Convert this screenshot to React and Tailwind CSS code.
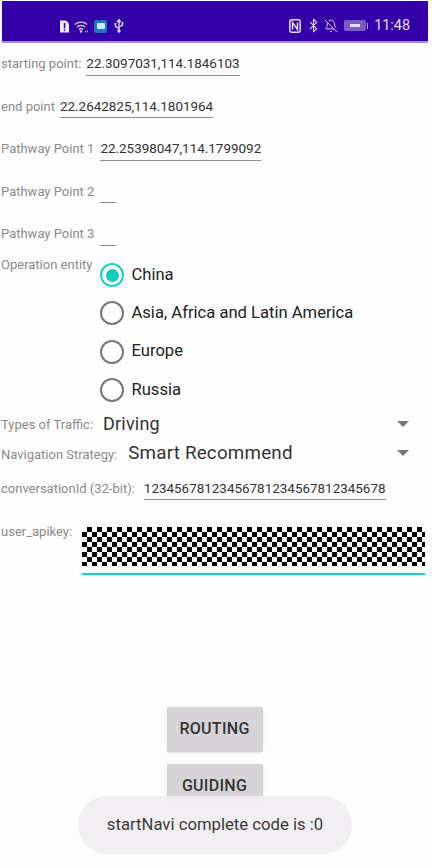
import React from "react";
import { Bluetooth, BellOff } from "lucide-react";

function Field({ label, value, h = "h-[42.6px]", gap = "ml-[5px]", w }) {
  return (
    <div className={`flex items-start ${h}`}>
      <span className="pl-[1px] text-[13px] leading-[20px] text-[#8b8b8b] whitespace-nowrap">{label}</span>
      <div className={`${gap} ${w || ""} border-b-[1.5px] border-[#8f8f8f] h-[21.5px] text-[13.45px] leading-[20px] text-[#333333] whitespace-nowrap`}>
        {value}
      </div>
    </div>
  );
}

function Radio({ label, checked }) {
  return (
    <div className="flex items-center h-[38.3px]">
      <div className={`w-[24px] h-[24px] rounded-full border-[2.5px] flex items-center justify-center ${checked ? "border-[#1dd0c2]" : "border-[#777777]"}`}>
        {checked && <div className="w-[13px] h-[13px] rounded-full bg-[#10cdbd]" />}
      </div>
      <span className="ml-[7px] text-[16.6px] text-[#222222] whitespace-nowrap">{label}</span>
    </div>
  );
}

function Spinner({ label, value, valueClass, h }) {
  return (
    <div className={`flex items-center ${h} relative`}>
      <span className="pl-[1px] pt-[2px] text-[13px] text-[#8b8b8b] whitespace-nowrap">{label}</span>
      <span className={`${valueClass} tracking-[0.2px] text-[#333333] whitespace-nowrap`}>{value}</span>
      <div className="ml-auto mr-[19px] w-0 h-0 border-l-[6px] border-r-[6px] border-t-[6px] border-l-transparent border-r-transparent border-t-[#777777]" />
    </div>
  );
}

function StatusIcons() {
  return (
    <div className="flex items-center justify-between h-[40px] pl-[57px] pr-[18px] text-[#e6def5]">
      <div className="flex items-center pt-[10px]">
        <svg width="11" height="13" viewBox="0 0 11 13">
          <path d="M1 0.5h6l3 3v9H1z" fill="#efeaf8" />
          <rect x="4.8" y="3" width="1.5" height="5.5" fill="#3200a8" />
          <rect x="4.8" y="9.5" width="1.5" height="1.5" fill="#3200a8" />
        </svg>
        <svg className="ml-[4px]" width="15" height="13" viewBox="0 0 15 13" fill="none" stroke="#d9d0ee" strokeWidth="1.3">
          <path d="M1 4.5a9 9 0 0 1 12 0" />
          <path d="M3 7a6 6 0 0 1 8 0" />
          <path d="M5 9.4a3 3 0 0 1 4 0" />
          <circle cx="7" cy="11.5" r="0.7" fill="#d9d0ee" />
          <path d="M11 11.5h3" strokeDasharray="1 1" />
        </svg>
        <div className="ml-[5px] w-[13px] h-[13px] rounded-[2px] bg-[#1b78c4] flex items-center justify-center">
          <div className="w-[8px] h-[6px] bg-[#cfe6f6] rounded-[1px]" />
        </div>
        <svg className="ml-[7px]" width="10" height="14" viewBox="0 0 10 14" fill="none" stroke="#e6def5" strokeWidth="1.3">
          <path d="M5 13V2" />
          <path d="M3.6 2.6 5 0.6l1.4 2z" fill="#e6def5" />
          <path d="M5 9.5 1.5 7.5V5.5" />
          <path d="M5 8 8.5 6V4.5" />
          <circle cx="5" cy="12" r="1" fill="#e6def5" />
          <rect x="0.6" y="4" width="1.8" height="1.8" fill="#e6def5" stroke="none" />
          <circle cx="8.5" cy="4" r="1" fill="#e6def5" stroke="none" />
        </svg>
      </div>
      <div className="flex items-center pt-[10px]">
        <svg width="12" height="14" viewBox="0 0 12 14" fill="none" stroke="#e6def5" strokeWidth="1.5">
          <rect x="0.8" y="0.8" width="10.4" height="12.4" rx="2" />
          <path d="M3.5 10.5V3.5l5 7V3.5" />
        </svg>
        <Bluetooth size={15} strokeWidth={1.7} className="ml-[5px]" />
        <BellOff size={14} strokeWidth={1.6} className="ml-[3px]" />
        <div className="ml-[6px] flex items-center">
          <div className="w-[22px] h-[11px] rounded-[2px] bg-[#7a5cc4] flex items-center justify-center">
            <div className="w-[10px] h-[3px] bg-[#e6def5]" />
          </div>
          <div className="ml-[1px] w-[1.5px] h-[6px] bg-[#b9a8e0]" />
        </div>
        <span className="ml-[6px] text-[14.4px] text-[#e6def5]">11:48</span>
      </div>
    </div>
  );
}

export default function App() {
  return (
    <div
      className="relative w-[432px] h-[868px] overflow-hidden bg-[#fdfdfd] pt-[1px]"
      style={{ fontFamily: "Roboto, sans-serif" }}
    >
      <div className="ml-[2px] mr-[4px] bg-[#3300a9] border-b-[2px] border-[#a58ad8]">
        <StatusIcons />
      </div>

      <div className="pt-[11px] mr-[4px]">
        <Field label="starting point:" value="22.3097031,114.1846103" />
        <Field label="end point" value="22.2642825,114.1801964" />
        <Field label="Pathway Point 1" value="22.25398047,114.1799092" gap="ml-[6px]" />
        <Field label="Pathway Point 2" value="" w="w-[16px]" gap="ml-[6px]" />
        <Field label="Pathway Point 3" value="" w="w-[16px]" gap="ml-[6px]" />

        <div className="flex items-start h-[154px] -mt-[12px]">
          <span className="pl-[1px] text-[13px] leading-[20px] text-[#8b8b8b] whitespace-nowrap">Operation entity</span>
          <div className="ml-[8px] pt-[1px]">
            <Radio label="China" checked />
            <Radio label="Asia, Africa and Latin America" />
            <Radio label="Europe" />
            <Radio label="Russia" />
          </div>
        </div>

        <Spinner label="Types of Traffic:" value="Driving" valueClass="ml-[10px] text-[18px]" h="h-[30px]" />
        <Spinner label="Navigation Strategy:" value="Smart Recommend" valueClass="ml-[11px] text-[18.8px]" h="h-[29px]" />

        <div className="mt-[11px]">
          <Field label="conversationId (32-bit):" value="12345678123456781234567812345678" gap="ml-[9px]" h="h-[43px]" />
        </div>

        <div className="flex items-start mr-[3px]">
          <span className="pl-[1px] text-[13px] leading-[20px] text-[#8b8b8b] whitespace-nowrap">user_apikey:</span>
          <div className="ml-[10px] mt-[5px] flex-1 border-b-[2.5px] border-[#1fd0c4] pb-[7px]">
            <div className="h-[39px] bg-[repeating-conic-gradient(#000000_0_25%,#ffffff_0_50%)] bg-[length:10px_10px]" />
          </div>
        </div>
      </div>

      <div className="mt-[132px] flex flex-col items-center gap-[12px] pr-[3px]">
        <button className="w-[96px] h-[45px] rounded-[2px] bg-[#d6d4d7] text-[16px] font-medium tracking-[0.3px] text-[#333333] shadow-sm">ROUTING</button>
        <button className="w-[96px] h-[45px] rounded-[2px] bg-[#d6d4d7] text-[16px] font-medium tracking-[0.3px] text-[#333333] shadow-sm">GUIDING</button>
      </div>

      <div className="absolute left-[78px] top-[796px] w-[274px] h-[58px] rounded-[29px] bg-[#f0eef1]/95 flex items-center justify-center text-[16.7px] text-[#3a3a3a] whitespace-nowrap">
        startNavi complete code is :0
      </div>
    </div>
  );
}
